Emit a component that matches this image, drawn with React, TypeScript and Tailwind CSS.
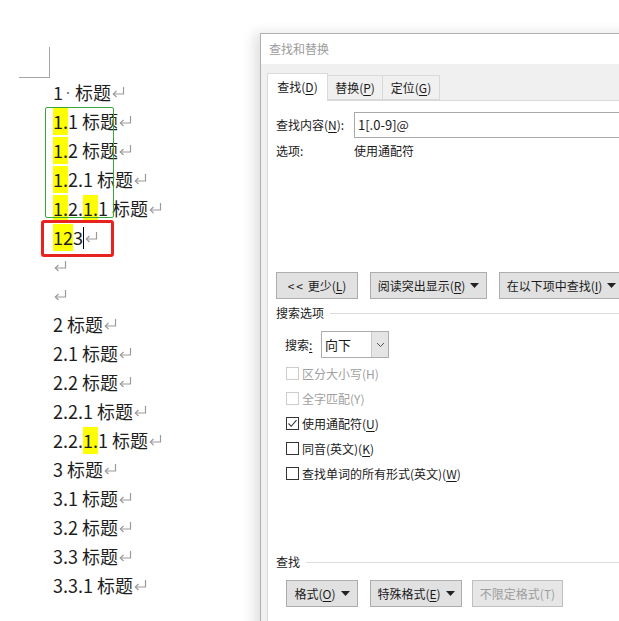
import React from 'react';

const hl = 'bg-[#ffff00]';

// Word paragraph mark
const Ret = () => (
  <svg width="13" height="12" viewBox="0 0 13 12" className="ml-[1px] mb-[2px] shrink-0">
    <path d="M11.5 1 V8 H1.5" stroke="#9a9a9a" strokeWidth="1.2" fill="none" />
    <path d="M4.5 5 L1.3 8 L4.5 11" stroke="#9a9a9a" strokeWidth="1.2" fill="none" />
  </svg>
);

type Seg = { t: string; h?: boolean; dot?: boolean };

const lines: Seg[][] = [
  [{ t: '1' }, { t: '·', dot: true }, { t: ' 标题' }],
  [{ t: '1.', h: true }, { t: '1 标题' }],
  [{ t: '1.', h: true }, { t: '2 标题' }],
  [{ t: '1.', h: true }, { t: '2.1 标题' }],
  [{ t: '1.', h: true }, { t: '2.' }, { t: '1.', h: true }, { t: '1 标题' }],
];

const lines2: Seg[][] = [
  [{ t: '2 标题' }],
  [{ t: '2.1 标题' }],
  [{ t: '2.2 标题' }],
  [{ t: '2.2.1 标题' }],
  [{ t: '2.2.' }, { t: '1.', h: true }, { t: '1 标题' }],
  [{ t: '3 标题' }],
  [{ t: '3.1 标题' }],
  [{ t: '3.2 标题' }],
  [{ t: '3.3 标题' }],
  [{ t: '3.3.1 标题' }],
];

const Line = ({ segs }: { segs: Seg[] }) => (
  <div className="h-[29px] leading-[29px] flex items-center whitespace-pre">
    {segs.map((s, i) => (
      <span
        key={i}
        className={s.h ? `${hl} leading-[27px]` : s.dot ? 'text-[#777] ml-[2px]' : ''}
        style={s.dot ? { fontFamily: '"Liberation Sans", sans-serif' } : undefined}
      >
        {s.t}
      </span>
    ))}
    <Ret />
  </div>
);

const Caret = () => (
  <svg width="9" height="5" viewBox="0 0 9 5" className="ml-[5px]">
    <path d="M0 0 L9 0 L4.5 5 Z" fill="#222" />
  </svg>
);

const Btn = ({ w, children, disabled }: { w: string; children: React.ReactNode; disabled?: boolean }) => (
  <div
    className={`${w} h-[27px] border flex items-center justify-center text-[12px] ${
      disabled ? 'border-[#bfbfbf] bg-[#e6e6e6] text-[#9d9d9d]' : 'border-[#adadad] bg-[#e1e1e1] text-[#1a1a1a]'
    }`}
  >
    {children}
  </div>
);

const Check = ({ label, checked, disabled }: { label: React.ReactNode; checked?: boolean; disabled?: boolean }) => (
  <div className="h-[25px] flex items-center pl-[10px]">
    <div
      className={`w-[13px] h-[13px] border flex items-center justify-center bg-white ${
        disabled ? 'border-[#cccccc]' : 'border-[#333333]'
      }`}
    >
      {checked && (
        <svg width="11" height="11" viewBox="0 0 11 11">
          <path d="M1.5 5.5 L4.2 8.3 L9.5 2.2" stroke="#333" strokeWidth="1.1" fill="none" />
        </svg>
      )}
    </div>
    <span className={`ml-[3px] text-[12px] ${disabled ? 'text-[#a0a0a0]' : 'text-[#1a1a1a]'}`}>{label}</span>
  </div>
);

const U = ({ c }: { c: string }) => <span className="underline underline-offset-2">{c}</span>;

export default function App() {
  return (
    <div
      className="relative w-[619px] h-[621px] overflow-hidden bg-white"
      style={{ fontFamily: '"Noto Sans CJK SC", "Noto Sans", sans-serif' }}
    >
      {/* document page */}
      <div className="w-[31px] h-[31px] ml-[19px] mt-[47px] border-r border-b border-[#a6a6a6]" />
      <div className="pl-[53px] text-[18px] text-[#1e1e1e]">
        {lines.map((l, i) => (
          <Line key={i} segs={l} />
        ))}
        <div className="h-[29px] flex items-center">
          <span className={`${hl} leading-[27px]`}>12</span>
          <span>3</span>
          <span className="w-px h-[22px] bg-black" />
          <Ret />
        </div>
        <div className="h-[29px] flex items-center">
          <Ret />
        </div>
        <div className="h-[29px] flex items-center">
          <Ret />
        </div>
        {lines2.map((l, i) => (
          <Line key={i} segs={l} />
        ))}
      </div>

      {/* annotation boxes */}
      <div className="absolute left-[45px] top-[107px] w-[69px] h-[111px] border border-[#3aa63a] rounded-[2px]" />
      <div className="absolute left-[41px] top-[220px] w-[73px] h-[37px] border-[3px] border-[#e8231f] rounded-[3px]" />

      {/* find & replace dialog */}
      <div className="absolute left-[260px] top-[33px] w-[420px] h-[620px] border border-[#b0b0b0] bg-[#f0f0f0] shadow-[-6px_0_12px_rgba(0,0,0,0.12)] flex flex-col">
        <div className="h-[30px] bg-white pl-[8px] flex items-center text-[12px] text-[#9b9b9b]">查找和替换</div>
        <div className="flex-1 pl-[6px] pt-[9px] flex flex-col">
          <div className="flex items-end text-[12px] text-[#1a1a1a]">
            <div className="w-[61px] h-[28px] bg-white border border-b-0 border-[#d9d9d9] flex items-center justify-center relative z-10 -mb-px pb-px">
              查找(<U c="D" />)
            </div>
            <div className="w-[55px] h-[25px] border border-l-0 border-[#d9d9d9] flex items-center justify-center">
              替换(<U c="P" />)
            </div>
            <div className="w-[57px] h-[25px] border border-l-0 border-[#d9d9d9] flex items-center justify-center">
              定位(<U c="G" />)
            </div>
          </div>
          <div className="flex-1 bg-white border-l border-t border-[#d9d9d9] pl-[8px] text-[12px] text-[#1a1a1a]">
            <div className="mt-[11px] h-[26px] flex items-center">
              <span className="w-[78px]">
                查找内容(<U c="N" />):
              </span>
              <div className="flex-1 h-[26px] border border-[#a9a9a9] border-r-0 flex items-center pl-[3px] text-[13px]">
                1[.0-9]@
              </div>
            </div>
            <div className="mt-[4px] h-[18px] flex items-center">
              <span className="w-[78px]">选项:</span>
              <span>使用通配符</span>
            </div>

            <div className="mt-[112px] flex gap-[12px]">
              <Btn w="w-[82px]">
                <span className="tracking-[2px]">&lt;&lt;</span>&nbsp;更少(<U c="L" />)
              </Btn>
              <Btn w="w-[117px]">
                阅读突出显示(<U c="R" />)
                <Caret />
              </Btn>
              <Btn w="w-[125px]">
                在以下项中查找(<U c="I" />)
                <Caret />
              </Btn>
            </div>

            <div className="mt-[5px] h-[18px] flex items-center">
              <span>搜索选项</span>
              <div className="flex-1 h-px bg-[#dcdcdc] ml-[6px]" />
            </div>

            <div className="mt-[9px] h-[27px] flex items-center pl-[9px]">
              <span className="w-[36px]">
                搜索<U c=":" />
              </span>
              <div className="w-[68px] h-[27px] border border-[#adadad] flex">
                <div className="flex-1 flex items-center pl-[3px] text-[13px]">向下</div>
                <div className="w-[17px] bg-[#e5e5e5] border-l border-[#c8c8c8] flex items-center justify-center">
                  <svg width="9" height="6" viewBox="0 0 9 6">
                    <path d="M1 1 L4.5 4.5 L8 1" stroke="#555" strokeWidth="1" fill="none" />
                  </svg>
                </div>
              </div>
            </div>

            <div className="mt-[3px]">
              <Check label="区分大小写(H)" disabled />
              <Check label="全字匹配(Y)" disabled />
              <Check
                label={
                  <>
                    使用通配符(<U c="U" />)
                  </>
                }
                checked
              />
              <Check
                label={
                  <>
                    同音(英文)(<U c="K" />)
                  </>
                }
              />
              <Check
                label={
                  <>
                    查找单词的所有形式(英文)(<U c="W" />)
                  </>
                }
              />
            </div>

            <div className="mt-[67px] h-[18px] flex items-center">
              <span>查找</span>
              <div className="flex-1 h-px bg-[#dcdcdc] ml-[6px]" />
            </div>

            <div className="mt-[9px] pl-[10px] flex gap-[12px]">
              <Btn w="w-[72px]">
                格式(<U c="O" />)
                <Caret />
              </Btn>
              <Btn w="w-[92px]">
                特殊格式(<U c="E" />)
                <Caret />
              </Btn>
              <div className="-ml-[2px]">
                <Btn w="w-[91px]" disabled>
                  不限定格式(T)
                </Btn>
              </div>
            </div>
          </div>
        </div>
      </div>
    </div>
  );
}
